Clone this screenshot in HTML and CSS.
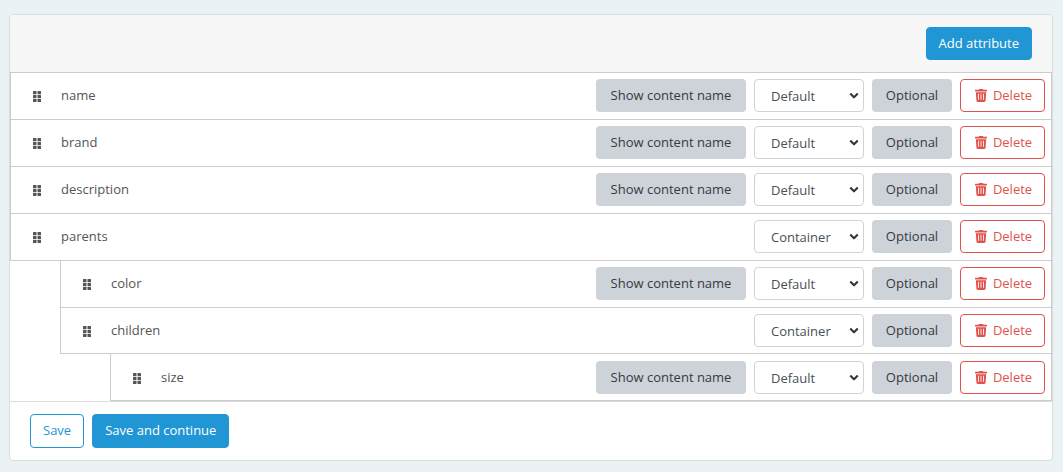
FILE: index.html
```html
<!DOCTYPE html>
<html lang="en">
<head>
    <meta charset="UTF-8">
    <title>Attributes</title>
    <link rel="stylesheet" href="styles.css">
</head>
<body>
    <svg class="defs" width="0" height="0">
        <symbol id="grip" viewBox="0 0 8 11">
            <rect x="0" y="0" width="3.500" height="3.200" rx=".5"/><rect x="4.500" y="0" width="3.500" height="3.200" rx=".5"/>
            <rect x="0" y="3.900" width="3.500" height="3.200" rx=".5"/><rect x="4.500" y="3.900" width="3.500" height="3.200" rx=".5"/>
            <rect x="0" y="7.800" width="3.500" height="3.200" rx=".5"/><rect x="4.500" y="7.800" width="3.500" height="3.200" rx=".5"/>
        </symbol>
        <symbol id="trash" viewBox="0 0 448 512" preserveAspectRatio="none">
            <path d="M432 32H312l-9.400-18.700A24 24 0 0 0 281.100 0H166.800a23.700 23.700 0 0 0-21.400 13.300L136 32H16A16 16 0 0 0 0 48v32a16 16 0 0 0 16 16h416a16 16 0 0 0 16-16V48a16 16 0 0 0-16-16zM53.200 467a48 48 0 0 0 47.900 45h245.800a48 48 0 0 0 47.900-45L416 128H32zM304 192a16 16 0 0 1 32 0v224a16 16 0 0 1-32 0zm-96 0a16 16 0 0 1 32 0v224a16 16 0 0 1-32 0zm-96 0a16 16 0 0 1 32 0v224a16 16 0 0 1-32 0z"/>
        </symbol>
    </svg>

    <div class="card">
        <div class="card-header">
            <button class="btn btn-primary">Add attribute</button>
        </div>

        <ul class="tree">
            <li>
                <div class="row">
                    <svg class="grip"><use href="#grip"/></svg>
                    <span class="name">name</span>
                    <button class="btn btn-grey btn-show">Show content name</button>
                    <select class="type"><option>Default</option></select>
                    <button class="btn btn-grey btn-optional">Optional</button>
                    <button class="btn btn-delete"><svg class="trash"><use href="#trash"/></svg>Delete</button>
                </div>
            </li>
            <li>
                <div class="row">
                    <svg class="grip"><use href="#grip"/></svg>
                    <span class="name">brand</span>
                    <button class="btn btn-grey btn-show">Show content name</button>
                    <select class="type"><option>Default</option></select>
                    <button class="btn btn-grey btn-optional">Optional</button>
                    <button class="btn btn-delete"><svg class="trash"><use href="#trash"/></svg>Delete</button>
                </div>
            </li>
            <li>
                <div class="row">
                    <svg class="grip"><use href="#grip"/></svg>
                    <span class="name">description</span>
                    <button class="btn btn-grey btn-show">Show content name</button>
                    <select class="type"><option>Default</option></select>
                    <button class="btn btn-grey btn-optional">Optional</button>
                    <button class="btn btn-delete"><svg class="trash"><use href="#trash"/></svg>Delete</button>
                </div>
            </li>
            <li>
                <div class="row">
                    <svg class="grip"><use href="#grip"/></svg>
                    <span class="name">parents</span>
                    <select class="type"><option>Container</option></select>
                    <button class="btn btn-grey btn-optional">Optional</button>
                    <button class="btn btn-delete"><svg class="trash"><use href="#trash"/></svg>Delete</button>
                </div>
                <ul class="tree nested">
                    <li>
                        <div class="row">
                            <svg class="grip"><use href="#grip"/></svg>
                            <span class="name">color</span>
                            <button class="btn btn-grey btn-show">Show content name</button>
                            <select class="type"><option>Default</option></select>
                            <button class="btn btn-grey btn-optional">Optional</button>
                            <button class="btn btn-delete"><svg class="trash"><use href="#trash"/></svg>Delete</button>
                        </div>
                    </li>
                    <li>
                        <div class="row row-tight">
                            <svg class="grip"><use href="#grip"/></svg>
                            <span class="name">children</span>
                            <select class="type"><option>Container</option></select>
                            <button class="btn btn-grey btn-optional">Optional</button>
                            <button class="btn btn-delete"><svg class="trash"><use href="#trash"/></svg>Delete</button>
                        </div>
                        <ul class="tree nested">
                            <li>
                                <div class="row row-deep">
                                    <svg class="grip"><use href="#grip"/></svg>
                                    <span class="name">size</span>
                                    <button class="btn btn-grey btn-show">Show content name</button>
                                    <select class="type"><option>Default</option></select>
                                    <button class="btn btn-grey btn-optional">Optional</button>
                                    <button class="btn btn-delete"><svg class="trash"><use href="#trash"/></svg>Delete</button>
                                </div>
                            </li>
                        </ul>
                    </li>
                </ul>
            </li>
        </ul>

        <div class="card-footer">
            <button class="btn btn-outline">Save</button>
            <button class="btn btn-primary">Save and continue</button>
        </div>
    </div>
</body>
</html>
```

FILE: styles.css
```css
* {
    box-sizing: border-box;
}

body {
    margin: 0;
    height: 472px;
    padding: 14px 10px 11px 9px;
    background-color: #ebf2f6;
    font-family: "Open Sans", "Noto Sans", sans-serif;
    font-size: 13px;
    color: #555555;
    overflow: hidden;
}

.defs {
    position: absolute;
}

.card {
    background-color: #ffffff;
    border: 1px solid #dcdcdc;
    border-radius: 4px;
}

.card-header {
    display: flex;
    justify-content: flex-end;
    height: 57px;
    padding: 12px 20px 0 0;
    background-color: #f7f7f7;
    border-radius: 4px 4px 0 0;
}

.card-footer {
    display: flex;
    gap: 8px;
    height: 59px;
    padding: 12px 20px 0 20px;
    border-top: 1px solid #dcdcdc;
}

.tree {
    list-style: none;
    margin: 0;
    padding: 0;
}

.nested {
    margin-left: 50px;
}

.row {
    display: flex;
    align-items: center;
    gap: 8px;
    height: 47px;
    padding: 0 6px 1px 0;
    border: 1px solid #cccccc;
    border-top: none;
}

.tree > li:first-child > .row {
    height: 48px;
    border-top: 1px solid #cccccc;
}

.nested > li:first-child > .row {
    height: 47px;
    border-top: none;
}

.row.row-tight {
    height: 46px;
    padding-bottom: 0;
}

.nested > li:first-child > .row-deep {
    padding: 1px 6px 0 0;
}

.grip {
    width: 8px;
    height: 11px;
    margin: 2px 0 0 22px;
    fill: #555555;
    flex: none;
}

.name {
    margin-left: 12px;
    margin-right: auto;
    padding-bottom: 2px;
}

.btn {
    height: 33px;
    padding: 0 12px 2px 12px;
    border: 1px solid transparent;
    border-radius: 4px;
    font-family: inherit;
    font-size: 13px;
    white-space: nowrap;
}

.btn-primary {
    background-color: #2196d4;
    color: #ffffff;
    border-color: #2196d4;
}

.btn-outline {
    background-color: #ffffff;
    color: #2196d4;
    border-color: #2196d4;
}

.card-footer .btn {
    height: 34px;
}

.btn-grey {
    background-color: #ced3da;
    color: #343a40;
}

.btn-show {
    width: 150px;
    padding: 0 0 2px 0;
}

.btn-optional {
    width: 80px;
    padding: 0 0 2px 0;
}

.btn-delete {
    display: flex;
    align-items: center;
    justify-content: center;
    gap: 6px;
    width: 85px;
    padding: 0 0 2px 2px;
    background-color: #ffffff;
    color: #e0534d;
    border-color: #e0534d;
}

.trash {
    width: 12px;
    height: 13px;
    margin-top: 2px;
    fill: #e0534d;
}

.type {
    appearance: none;
    width: 110px;
    height: 33px;
    padding: 0 0 0 16px;
    background-color: #ffffff;
    background-image: url("data:image/svg+xml,%3csvg xmlns='http://www.w3.org/2000/svg' viewBox='0 0 16 16'%3e%3cpath fill='none' stroke='%23343a40' stroke-linejoin='round' stroke-width='3.500' d='m2 4 6 6 6-6'/%3e%3c/svg%3e");
    background-repeat: no-repeat;
    background-position: right 4px center;
    background-size: 10px 10px;
    border: 1px solid #ced4da;
    border-radius: 4px;
    font-family: inherit;
    font-size: 13px;
    color: #495057;
}
```
